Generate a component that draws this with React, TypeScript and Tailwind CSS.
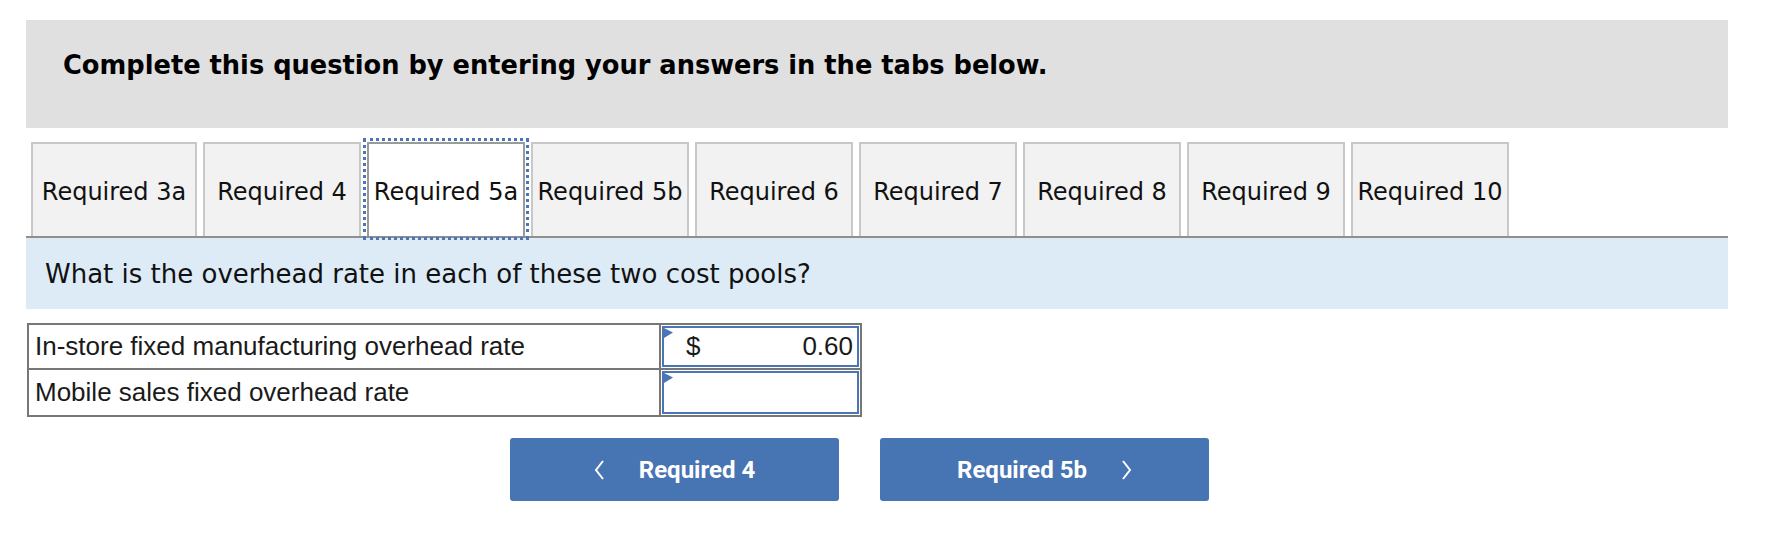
import React from 'react';

const tabs = [
  'Required 3a',
  'Required 4',
  'Required 5a',
  'Required 5b',
  'Required 6',
  'Required 7',
  'Required 8',
  'Required 9',
  'Required 10',
];

function Flag() {
  return (
    <svg className="absolute left-0 top-0" width="10" height="11" viewBox="0 0 10 11">
      <polygon points="0,0 9,4.5 0,10" fill="#4a76b8" />
    </svg>
  );
}

function AnswerCell({ value }: { value?: string }) {
  return (
    <div className="relative flex h-full items-center justify-between border-2 border-[#4a76b8] bg-white pl-[22px] pr-[4px]">
      <Flag />
      {value ? (
        <>
          <span>$</span>
          <span>{value}</span>
        </>
      ) : null}
    </div>
  );
}

export default function App() {
  return (
    <div className="min-h-[558px] w-full bg-white pt-[20px]">
      <div className="ml-[26px] w-[1702px]">
        {/* instructions banner */}
        <div className="h-[108px] bg-[#e0e0e0] pl-[37px] pt-[28px]">
          <h1
            className="text-[25.7px] leading-[34px] font-bold text-black"
            style={{ fontFamily: '"DejaVu Sans", Verdana, sans-serif' }}
          >
            Complete this question by entering your answers in the tabs below.
          </h1>
        </div>

        {/* tabs */}
        <div
          className="mt-[14px] flex gap-[6px] border-b-2 border-[#8f8f8f] pl-[5px] text-[24px] text-[#111]"
          style={{ fontFamily: '"DejaVu Sans", Verdana, sans-serif' }}
        >
          {tabs.map((t, i) =>
            i === 2 ? (
              <div
                key={t}
                className="flex h-[94px] w-[158px] items-center justify-center border-2 border-b-0 border-[#9a9a9a] bg-white pt-[4px] outline-[3px] outline-offset-[1px] outline-dotted outline-[#4a76b8] whitespace-nowrap"
              >
                {t}
              </div>
            ) : (
              <div
                key={t}
                className={
                  (i === 0 ? 'w-[166px] ' : 'w-[158px] ') +
                  'flex h-[94px] items-center justify-center border-2 border-b-0 border-[#c8c8c8] bg-[#f2f2f2] pt-[4px] whitespace-nowrap'
                }
              >
                {t}
              </div>
            )
          )}
        </div>

        {/* question */}
        <div
          className="flex h-[71px] items-center bg-[#ddebf7] pl-[19px] pt-[2px] text-[26px] text-[#111]"
          style={{ fontFamily: '"DejaVu Sans", Verdana, sans-serif' }}
        >
          What is the overhead rate in each of these two cost pools?
        </div>

        {/* answer table */}
        <div
          className="ml-[1px] mt-[14px] w-[835px] border-2 border-[#777] text-[26px] text-[#1a1a1a]"
          style={{ fontFamily: '"Liberation Sans", Arial, sans-serif' }}
        >
          <div className="flex h-[45px] border-b-2 border-[#777]">
            <div className="flex w-[632px] items-center border-r-2 border-[#777] pl-[6px]">
              In-store fixed manufacturing overhead rate
            </div>
            <div className="flex-1 p-[1px]">
              <AnswerCell value="0.60" />
            </div>
          </div>
          <div className="flex h-[45px]">
            <div className="flex w-[632px] items-center border-r-2 border-[#777] pl-[6px]">
              Mobile sales fixed overhead rate
            </div>
            <div className="flex-1 p-[1px]">
              <AnswerCell />
            </div>
          </div>
        </div>

        {/* navigation */}
        <div
          className="ml-[484px] mt-[21px] flex gap-[41px] text-[24px] font-bold text-white"
          style={{ fontFamily: 'Roboto, "Liberation Sans", sans-serif' }}
        >
          <button className="flex h-[63px] w-[329px] items-center justify-center gap-[34px] rounded-[3px] bg-[#4774b3]">
            <svg width="11" height="20" viewBox="0 0 11 20">
              <polyline points="9,1 2,10 9,19" fill="none" stroke="white" strokeWidth="2" />
            </svg>
            <span>Required 4</span>
          </button>
          <button className="flex h-[63px] w-[329px] items-center justify-center gap-[34px] rounded-[3px] bg-[#4774b3]">
            <span>Required 5b</span>
            <svg width="11" height="20" viewBox="0 0 11 20">
              <polyline points="2,1 9,10 2,19" fill="none" stroke="white" strokeWidth="2" />
            </svg>
          </button>
        </div>
      </div>
    </div>
  );
}
